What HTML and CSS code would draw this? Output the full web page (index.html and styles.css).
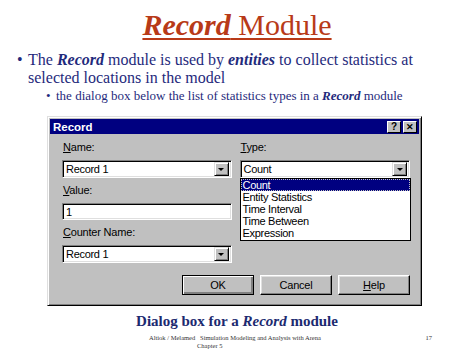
FILE: index.html
```html
<!DOCTYPE html>
<html lang="en">
<head>
  <meta charset="UTF-8">
  <title>Record Module</title>
  <link rel="stylesheet" href="styles.css">
</head>
<body>
  <div class="slide">
    <h1 class="title"><em>Record</em> Module</h1>

    <ul class="points">
      <li class="point">
        <span class="dot">&bull;</span>
        <span>The <b><i>Record</i></b> module is used by <b><i>entities</i></b> to collect statistics at selected locations in the model</span>
      </li>
      <li class="sub-point">
        <span class="dot">&bull;</span>
        <span>the dialog box below the list of statistics types in a <b><i>Record</i></b> module</span>
      </li>
    </ul>

    <div class="dialog">
      <div class="titlebar">
        <span class="titlebar-text">Record</span>
        <div class="titlebar-btns">
          <span class="tb-btn">?</span>
          <span class="tb-btn tb-close">&#x2715;</span>
        </div>
      </div>

      <div class="dialog-body">
        <div class="col">
          <div class="field">
            <div class="label"><u>N</u>ame:</div>
            <div class="combo">
              <span class="combo-text">Record 1</span>
              <span class="combo-arrow"><span class="tri"></span></span>
            </div>
          </div>
          <div class="field">
            <div class="label"><u>V</u>alue:</div>
            <div class="textbox">1</div>
          </div>
          <div class="field">
            <div class="label"><u>C</u>ounter Name:</div>
            <div class="combo">
              <span class="combo-text">Record 1</span>
              <span class="combo-arrow"><span class="tri"></span></span>
            </div>
          </div>
        </div>

        <div class="col">
          <div class="field type-field">
            <div class="label"><u>T</u>ype:</div>
            <div class="combo">
              <span class="combo-text">Count</span>
              <span class="combo-arrow"><span class="tri"></span></span>
            </div>
            <ul class="droplist">
              <li class="selected">Count</li>
              <li>Entity Statistics</li>
              <li>Time Interval</li>
              <li>Time Between</li>
              <li>Expression</li>
            </ul>
          </div>
        </div>
      </div>

      <div class="buttons">
        <button class="btn btn-default">OK</button>
        <button class="btn">Cancel</button>
        <button class="btn"><u>H</u>elp</button>
      </div>
    </div>

    <p class="caption">Dialog box for a <i>Record</i> module</p>

    <div class="footer">
      <div class="footer-text">
        <div>Altiok / Melamed &nbsp; Simulation Modeling and Analysis with Arena</div>
        <div class="chapter">Chapter 5</div>
      </div>
      <div class="page-no">17</div>
    </div>
  </div>
</body>
</html>
```

FILE: styles.css
```css
body {
    margin: 0;
    padding: 0;
    background-color: #ffffff;
}

.slide {
    width: 474px;
    height: 355px;
    overflow: hidden;
    font-family: "Liberation Serif", "Times New Roman", serif;
    color: #1f2a7c;
}

.title {
    margin: 0;
    padding-top: 8px;
    font-size: 30px;
    line-height: 34px;
    font-weight: normal;
    text-align: center;
    color: #b83a18;
    text-decoration: underline;
    text-decoration-thickness: 2px;
    text-underline-offset: 3px;
}

.title em {
    font-weight: bold;
}

.points {
    list-style: none;
    margin: 9px 0 0 0;
    padding: 0;
}

.point {
    display: flex;
    padding-left: 17px;
    padding-right: 50px;
    font-size: 16px;
    line-height: 18px;
}

.point .dot {
    width: 11px;
    flex-shrink: 0;
}

.sub-point {
    display: flex;
    margin-top: 1px;
    padding-left: 46px;
    font-size: 13px;
    line-height: 15px;
}

.sub-point .dot {
    width: 10px;
    flex-shrink: 0;
}

/* dialog */

.dialog {
    box-sizing: border-box;
    width: 375px;
    height: 190px;
    margin: 13px 0 0 47px;
    background-color: #c0c0c0;
    border-top: 1px solid #dfdfdf;
    border-left: 1px solid #dfdfdf;
    border-right: 1px solid #000000;
    border-bottom: 1px solid #000000;
    box-shadow: inset 1px 1px 0 #ffffff, inset -1px -1px 0 #808080;
    padding: 2px;
    font-family: "Liberation Sans", Arial, sans-serif;
    font-size: 11px;
    color: #000000;
}

.titlebar {
    display: flex;
    align-items: center;
    justify-content: space-between;
    height: 15px;
    background-color: #000080;
    padding: 0 2px 0 3px;
}

.titlebar-text {
    color: #ffffff;
    font-weight: bold;
    font-size: 11.5px;
}

.titlebar-btns {
    display: flex;
    gap: 2px;
}

.tb-btn {
    box-sizing: border-box;
    width: 14px;
    height: 12px;
    background-color: #c0c0c0;
    border-top: 1px solid #ffffff;
    border-left: 1px solid #ffffff;
    border-right: 1px solid #000000;
    border-bottom: 1px solid #000000;
    font-size: 10px;
    font-weight: bold;
    line-height: 10px;
    text-align: center;
}

.tb-close {
    font-size: 9px;
}

.dialog-body {
    display: flex;
    gap: 8px;
    padding: 6px 9px 0 12px;
}

.col {
    display: flex;
    flex-direction: column;
    gap: 5px;
}

.col:first-child {
    width: 170px;
}

.col:last-child {
    width: 171px;
}

.field {
    display: flex;
    flex-direction: column;
}

.type-field {
    position: relative;
}

.label {
    height: 14px;
    line-height: 14px;
    margin-bottom: 6px;
    padding-left: 1px;
    letter-spacing: -0.2px;
}

.combo,
.textbox {
    box-sizing: border-box;
    display: flex;
    align-items: center;
    justify-content: space-between;
    height: 18px;
    background-color: #ffffff;
    border-top: 1px solid #808080;
    border-left: 1px solid #808080;
    border-right: 1px solid #ffffff;
    border-bottom: 1px solid #ffffff;
    box-shadow: inset 1px 1px 0 #000000, inset -1px -1px 0 #dfdfdf;
    padding: 2px 2px 2px 3px;
    font-size: 11px;
    letter-spacing: -0.3px;
}

.textbox {
    height: 17px;
}

.combo-arrow {
    box-sizing: border-box;
    display: flex;
    align-items: center;
    justify-content: center;
    width: 15px;
    height: 14px;
    background-color: #c0c0c0;
    border-top: 1px solid #dfdfdf;
    border-left: 1px solid #dfdfdf;
    border-right: 1px solid #000000;
    border-bottom: 1px solid #000000;
    box-shadow: inset 1px 1px 0 #ffffff, inset -1px -1px 0 #808080;
}

.tri {
    width: 0;
    height: 0;
    border-left: 3px solid transparent;
    border-right: 3px solid transparent;
    border-top: 3px solid #000000;
}

.droplist {
    position: absolute;
    top: 38px;
    left: 0;
    width: 171px;
    box-sizing: border-box;
    list-style: none;
    margin: 0;
    padding: 0 0 1px 0;
    background-color: #ffffff;
    border: 1px solid #000000;
    font-size: 11px;
    letter-spacing: -0.3px;
    z-index: 5;
}

.droplist li {
    height: 12px;
    line-height: 12px;
    padding-left: 2px;
}

.droplist li.selected {
    background-color: #000080;
    color: #ffffff;
    outline: 1px dotted #c0c0c0;
    outline-offset: -1px;
}

.buttons {
    display: flex;
    justify-content: flex-end;
    gap: 6px;
    padding: 12px 9px 0 0;
}

.btn {
    box-sizing: border-box;
    width: 72px;
    height: 20px;
    padding: 0;
    background-color: #c0c0c0;
    border-top: 1px solid #ffffff;
    border-left: 1px solid #ffffff;
    border-right: 1px solid #000000;
    border-bottom: 1px solid #000000;
    box-shadow: inset -1px -1px 0 #808080, inset 1px 1px 0 #dfdfdf;
    font-family: "Liberation Sans", Arial, sans-serif;
    font-size: 11px;
    letter-spacing: -0.2px;
    color: #000000;
}

.btn-default {
    border: 1px solid #000000;
    box-shadow: inset 1px 1px 0 #ffffff, inset -2px -2px 0 #808080;
}

/* caption and footer */

.caption {
    margin: 6px 0 0 0;
    font-size: 15px;
    line-height: 18px;
    font-weight: bold;
    text-align: center;
    color: #1c2a70;
}

.footer {
    display: flex;
    align-items: flex-start;
    margin-top: 4px;
    color: #333333;
    font-size: 6.5px;
    line-height: 8px;
}

.footer-text {
    margin-left: 149px;
    white-space: nowrap;
}

.footer-text .chapter {
    padding-left: 48px;
}

.page-no {
    margin-left: auto;
    margin-right: 42px;
}
```
